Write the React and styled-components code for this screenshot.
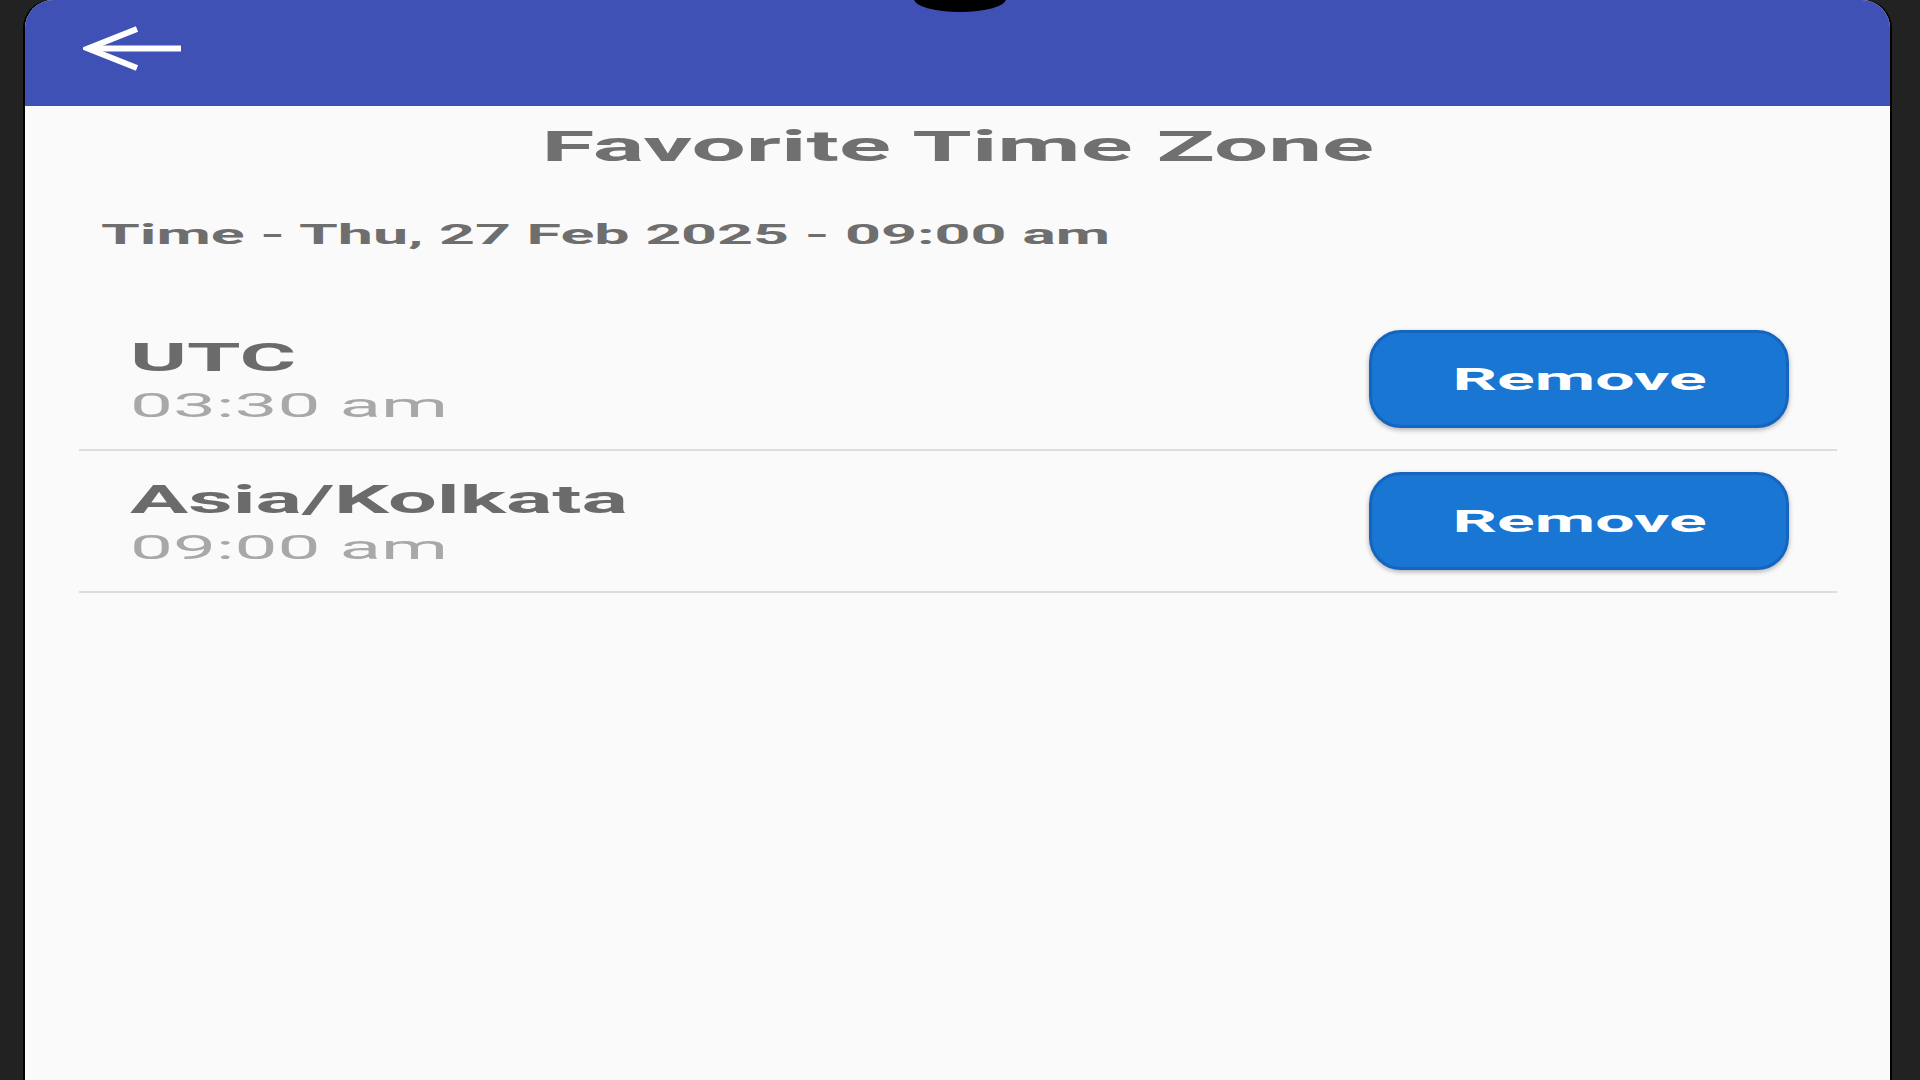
import React from "react";
import styled, { createGlobalStyle } from "styled-components";

const Global = createGlobalStyle`
  html, body { margin: 0; padding: 0; background: #222222; overflow: hidden; }
  body { font-family: Roboto, "Noto Sans", "Liberation Sans", sans-serif; }
`;

const Device = styled.div`
  width: 1920px;
  height: 1080px;
  box-sizing: border-box;
  padding: 0 30px 0 25px;
  background: #222222;
  display: flex;
`;

const Screen = styled.div`
  position: relative;
  flex: 1;
  height: 1080px;
  background: #fafafa;
  border-radius: 28px 28px 0 0;
  overflow: hidden;
  box-shadow: -2px 0 0 #000, 2px 0 0 #000;
  display: flex;
  flex-direction: column;
`;

const Camera = styled.div`
  position: absolute;
  left: 50%;
  top: -14px;
  width: 92px;
  height: 26px;
  margin-left: -44px;
  border-radius: 50%;
  background: #000;
`;

const AppBar = styled.header`
  height: 106px;
  flex: none;
  background: #3f51b5;
  display: flex;
  align-items: flex-start;
  padding: 26px 0 0 58px;
  box-sizing: border-box;
`;

const BackButton = styled.button`
  border: 0;
  padding: 0;
  background: transparent;
  width: 100px;
  height: 45px;
  display: block;
  cursor: pointer;
`;

const Stretch = styled.span`
  display: inline-block;
  white-space: nowrap;
  transform: scaleX(${(p) => p.$sx});
  transform-origin: ${(p) => p.$origin || "left"} center;
`;

const Title = styled.h1`
  margin: 16px 0 0;
  font-size: 42px;
  line-height: 50px;
  font-weight: 700;
  color: #707070;
  text-align: center;
`;

const Subtitle = styled.div`
  margin: 46px 0 0 76px;
  font-size: 28px;
  line-height: 33px;
  font-weight: 700;
  color: #6e6e6e;
`;

const List = styled.ul`
  list-style: none;
  margin: 58px 53px 0 54px;
  padding: 0;
`;

const Row = styled.li`
  height: 142px;
  box-sizing: border-box;
  padding: 20px 48px 20px 51px;
  border-bottom: 2px solid #dedede;
  display: flex;
  align-items: center;
  justify-content: space-between;
`;

const ZoneInfo = styled.div`
  display: flex;
  flex-direction: column;
  padding-top: 6px;
`;

const ZoneName = styled.div`
  font-size: 39px;
  line-height: 46px;
  font-weight: 700;
  color: #6b6b6b;
`;

const ZoneTime = styled.div`
  font-size: 34px;
  line-height: 48px;
  font-weight: 400;
  color: #a8a8a8;
`;

const RemoveButton = styled.button`
  width: 420px;
  height: 98px;
  box-sizing: border-box;
  border-radius: 32px;
  border: 3px solid #1565c0;
  background: #1976d2;
  box-shadow: 0 2px 5px rgba(0, 0, 0, 0.3);
  color: #ffffff;
  font-family: Roboto, "Noto Sans", sans-serif;
  font-size: 31px;
  font-weight: 700;
  display: flex;
  align-items: center;
  justify-content: center;
  padding: 0;
  cursor: pointer;
`;

const zones = [
  { name: "UTC", time: "03:30 am" },
  { name: "Asia/Kolkata", time: "09:00 am" },
];

export default function App() {
  return (
    <>
      <Global />
      <Device>
        <Screen>
          <Camera />
          <AppBar>
            <BackButton aria-label="Back">
              <svg width="100" height="45" viewBox="0 0 100 45">
                <polyline
                  points="54,3 5,22.5 54,42"
                  fill="none"
                  stroke="#ffffff"
                  strokeWidth="6"
                  strokeLinejoin="miter"
                />
                <line x1="6" y1="22.5" x2="98" y2="22.5" stroke="#ffffff" strokeWidth="6" />
              </svg>
            </BackButton>
          </AppBar>
          <Title>
            <Stretch $sx={2.29} $origin="center">Favorite Time Zone</Stretch>
          </Title>
          <Subtitle>
            <Stretch $sx={2.24}>Time - Thu, 27 Feb 2025 - 09:00 am</Stretch>
          </Subtitle>
          <List>
            {zones.map((z) => (
              <Row key={z.name}>
                <ZoneInfo>
                  <ZoneName>
                    <Stretch $sx={2.22}>{z.name}</Stretch>
                  </ZoneName>
                  <ZoneTime>
                    <Stretch $sx={2.25}>{z.time}</Stretch>
                  </ZoneTime>
                </ZoneInfo>
                <RemoveButton>
                  <Stretch $sx={2.25} $origin="center">Remove</Stretch>
                </RemoveButton>
              </Row>
            ))}
          </List>
        </Screen>
      </Device>
    </>
  );
}
